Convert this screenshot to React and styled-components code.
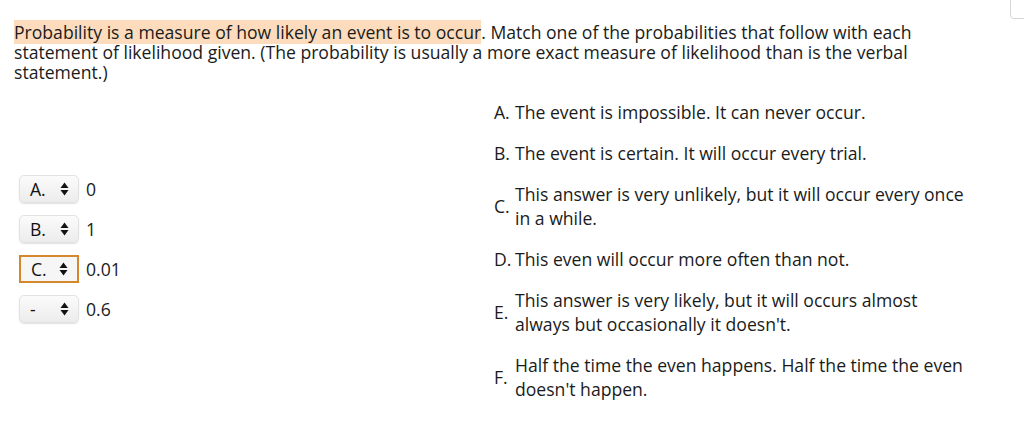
import React from 'react';
import styled, { createGlobalStyle } from 'styled-components';

const Global = createGlobalStyle`
  html, body {
    margin: 0;
    background: #ffffff;
  }
  body {
    font-family: "Open Sans", "Noto Sans", sans-serif;
    font-size: 17.6px;
    color: #1b1b1b;
  }
`;

const Page = styled.div`
  position: relative;
  width: 1024px;
  height: 436px;
  padding: 22px 14px 0 14px;
  box-sizing: border-box;
  overflow: hidden;
`;

const CornerTab = styled.div`
  position: absolute;
  top: -6px;
  right: -10px;
  width: 22px;
  height: 23px;
  border: 1px solid #d6d6d6;
  border-radius: 4px;
  background: #fff;
`;

const Prompt = styled.p`
  margin: 0;
  width: 930px;
  line-height: 20px;
`;

const Mark = styled.span`
  background: #fcdcbc;
`;

const Match = styled.div`
  display: flex;
  margin-top: 18px;
`;

const Picks = styled.div`
  width: 480px;
  display: flex;
  flex-direction: column;
  justify-content: center;
  gap: 12px;
  padding-left: 5px;
  box-sizing: border-box;
  padding-bottom: 4px;
`;

const PickRow = styled.div`
  display: flex;
  align-items: center;
  gap: 7px;
  height: 28px;
`;

const Select = styled.div`
  width: 60px;
  height: 28px;
  box-sizing: border-box;
  display: flex;
  align-items: center;
  justify-content: space-between;
  padding: 0 9px 0 10px;
  border-radius: ${p => (p.$focused ? '0' : '5px')};
  border: ${p => (p.$focused ? '2px solid #d4872c' : '1px solid #e2e2e2')};
  background: ${p =>
    p.$focused ? '#f6f6f6' : 'linear-gradient(#fbfbfb, #ececec)'};
  box-shadow: ${p => (p.$focused ? 'none' : '0 1px 1.5px rgba(0,0,0,0.12)')};
  color: #111;
`;

const Value = styled.span``;

const Options = styled.div`
  display: flex;
  flex-direction: column;
  gap: 17px;
`;

const Option = styled.div`
  display: flex;
  align-items: center;
  line-height: 24px;
`;

const Letter = styled.span`
  width: 21px;
  flex: none;
`;

const OptionText = styled.span`
  width: 455px;
`;

const Arrows = () => (
  <svg width="9" height="14" viewBox="0 0 9 14">
    <path d="M4.5 0.5 L8.5 6 L0.5 6 Z" fill="#111" />
    <path d="M4.5 13.5 L8.5 8 L0.5 8 Z" fill="#111" />
  </svg>
);

const picks = [
  { label: 'A.', value: '0' },
  { label: 'B.', value: '1' },
  { label: 'C.', value: '0.01', focused: true },
  { label: '-', value: '0.6' },
];

const options = [
  ['A.', 'The event is impossible. It can never occur.'],
  ['B.', 'The event is certain. It will occur every trial.'],
  ['C.', 'This answer is very unlikely, but it will occur every once in a while.'],
  ['D.', 'This even will occur more often than not.'],
  ['E.', "This answer is very likely, but it will occurs almost always but occasionally it doesn't."],
  ['F.', "Half the time the even happens. Half the time the even doesn't happen."],
];

export default function App() {
  return (
    <Page>
      <Global />
      <CornerTab />
      <Prompt>
        <Mark>Probability is a measure of how likely an event is to occur</Mark>. Match one of
        the probabilities that follow with each statement of likelihood given. (The probability
        is usually a more exact measure of likelihood than is the verbal statement.)
      </Prompt>
      <Match>
        <Picks>
          {picks.map(p => (
            <PickRow key={p.value}>
              <Select $focused={p.focused}>
                <span>{p.label}</span>
                <Arrows />
              </Select>
              <Value>{p.value}</Value>
            </PickRow>
          ))}
        </Picks>
        <Options>
          {options.map(([l, t]) => (
            <Option key={l}>
              <Letter>{l}</Letter>
              <OptionText>{t}</OptionText>
            </Option>
          ))}
        </Options>
      </Match>
    </Page>
  );
}
